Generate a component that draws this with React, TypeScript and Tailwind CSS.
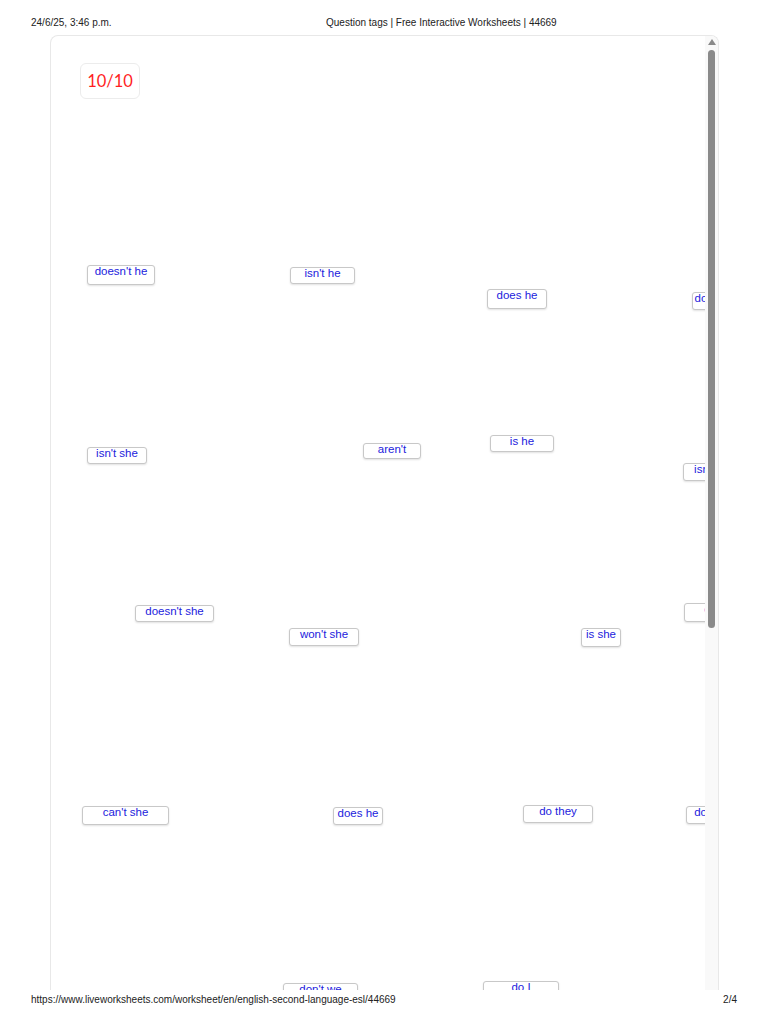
import React from "react";

type Gap = { text: string; x: number; y: number; w: number; h: number };

// positions taken from the page (absolute page coords), canvas origin is 51,36
const gaps: Gap[] = [
  { text: "doesn't he", x: 87, y: 265, w: 68, h: 20 },
  { text: "isn't he", x: 290, y: 267, w: 65, h: 17 },
  { text: "does he", x: 487, y: 289, w: 60, h: 20 },
  { text: "does he", x: 692, y: 292, w: 46, h: 18 },
  { text: "isn't she", x: 87, y: 447, w: 60, h: 17 },
  { text: "aren't", x: 363, y: 443, w: 58, h: 16 },
  { text: "is he", x: 490, y: 435, w: 64, h: 17 },
  { text: "isn't she", x: 683, y: 463, w: 64, h: 18 },
  { text: "doesn't she", x: 135, y: 605, w: 79, h: 17 },
  { text: "won't she", x: 289, y: 628, w: 70, h: 18 },
  { text: "is she", x: 581, y: 628, w: 40, h: 19 },
  { text: "can't she", x: 684, y: 603, w: 86, h: 19 },
  { text: "can't she", x: 82, y: 806, w: 87, h: 19 },
  { text: "does he", x: 333, y: 807, w: 50, h: 18 },
  { text: "do they", x: 523, y: 805, w: 70, h: 18 },
  { text: "do they", x: 686, y: 806, w: 54, h: 18 },
  { text: "don't we", x: 283, y: 983, w: 75, h: 18 },
  { text: "do I", x: 483, y: 981, w: 76, h: 18 },
];

function GapBox({ g }: { g: Gap }) {
  return (
    <div
      className="absolute border border-[#c8c8c8] rounded-[3px] bg-white shadow-[0_1px_2px_rgba(0,0,0,0.12)] text-center text-[11.5px] leading-[11px] text-[#2222dd] whitespace-nowrap overflow-hidden"
      style={{ left: g.x - 51, top: g.y - 36, width: g.w, height: g.h }}
    >
      {g.text}
    </div>
  );
}

export default function App() {
  return (
    <div className="w-[768px] h-[1024px] bg-white overflow-hidden flex flex-col font-['Liberation_Sans',Arial,sans-serif] text-[#222]">
      <div className="h-[35px] pt-[17px] px-[31px] flex text-[10px] leading-[12px] shrink-0">
        <span className="w-[295px]">24/6/25, 3:46 p.m.</span>
        <span>Question tags | Free Interactive Worksheets | 44669</span>
      </div>

      <div className="ml-[50px] w-[669px] h-[955px] shrink-0 border border-b-0 border-[#e8e8e8] rounded-t-[8px] flex overflow-hidden">
        <div className="relative w-[654px] h-full overflow-hidden">
          <div className="ml-[29px] mt-[27px] w-[60px] h-[36px] border border-[#ececec] rounded-[6px] flex items-center justify-center font-['Lato',sans-serif] text-[16.5px] text-[#ff1f1f]">
            10/10
          </div>
          {gaps.map((g, i) => (
            <GapBox key={i} g={g} />
          ))}
        </div>

        <div className="w-[13px] h-full bg-[#f9f9f9] flex flex-col items-center pt-[3px]">
          <svg width="8" height="6" viewBox="0 0 8 6" className="mt-[0px]">
            <polygon points="4,0 8,6 0,6" fill="#8a8a8a" />
          </svg>
          <div className="mt-[5px] w-[7px] h-[578px] rounded-full bg-[#8a8a8a]" />
        </div>
      </div>

      <div className="pt-[4px] px-[31px] flex justify-between text-[10px] leading-[12px]">
        <span>https://www.liveworksheets.com/worksheet/en/english-second-language-esl/44669</span>
        <span>2/4</span>
      </div>
    </div>
  );
}
